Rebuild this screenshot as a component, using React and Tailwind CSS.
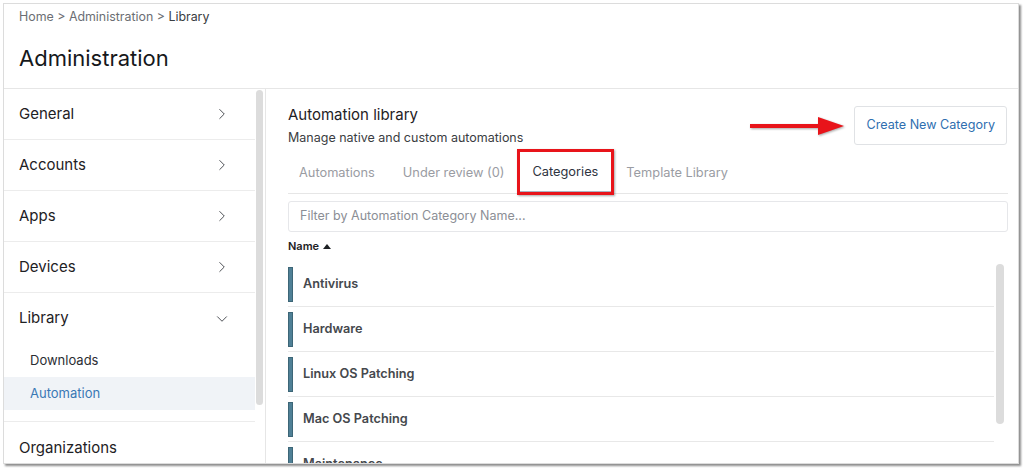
import React from "react";
import { ChevronRight, ChevronDown } from "lucide-react";

const navItems = ["General", "Accounts", "Apps", "Devices"];
const categories = ["Antivirus", "Hardware", "Linux OS Patching", "Mac OS Patching", "Maintenance"];
const tabs = ["Automations", "Under review (0)", "Categories", "Template Library"];

function NavRow({ label }) {
  return (
    <div className="flex h-[51px] items-center justify-between border-b border-[#ececec] pl-[15px] pr-[24px]">
      <span className="text-[15px] text-[#1e2124]">{label}</span>
      <ChevronRight size={18} strokeWidth={1.3} className="text-[#4a4d52]" />
    </div>
  );
}

function Arrow() {
  return (
    <svg width="96" height="22" viewBox="0 0 96 22" className="drop-shadow-[1px_1px_1px_rgba(0,0,0,0.35)]">
      <rect x="0" y="9" width="70" height="4" fill="#e8141a" />
      <polygon points="68,2 94,11 68,20" fill="#e8141a" />
    </svg>
  );
}

export default function App() {
  return (
    <div className="h-[468px] w-[1024px] overflow-hidden bg-white" style={{ fontFamily: "Inter, 'Noto Sans', sans-serif" }}>
      <div className="ml-[3px] mt-[3px] flex h-[461px] w-[1016px] flex-col overflow-hidden border border-[#dcdcdc] bg-white shadow-[2px_2px_2px_rgba(0,0,0,0.45)]">
        <div className="h-[85px] shrink-0 border-b border-[#e6e6e6] pl-[15px] pt-[5px]">
          <div className="text-[12.4px] leading-[16px] text-[#6b6e73]">
            Home &gt; Administration &gt; <span className="text-[#3a3d42]">Library</span>
          </div>
          <h1 className="mt-[19px] text-[22px] leading-[28px] text-[#16181b]">Administration</h1>
        </div>
        <div className="flex min-h-0 flex-1">
          <aside className="flex w-[262px] shrink-0 border-r border-[#e6e6e6]">
            <div className="w-[252px]">
              {navItems.map((n) => (
                <NavRow key={n} label={n} />
              ))}
              <div className="border-b border-[#ececec] pb-[11px]">
                <div className="flex h-[51px] items-center justify-between pl-[15px] pr-[24px]">
                  <span className="text-[15px] text-[#1e2124]">Library</span>
                  <ChevronDown size={18} strokeWidth={1.3} className="text-[#4a4d52]" />
                </div>
                <div className="flex h-[33px] items-center pl-[26px] text-[13px] text-[#2b2e33]">Downloads</div>
                <div className="flex h-[33px] items-center bg-[#f0f3f7] pl-[26px] text-[13px] text-[#3a78b5]">Automation</div>
              </div>
              <div className="flex h-[52px] items-center pl-[15px] text-[15px] text-[#1e2124]">Organizations</div>
            </div>
            <div className="w-[10px] pl-[1px] pt-[1px]">
              <div className="h-[315px] w-[7px] rounded-full bg-[#dcdcdc]" />
            </div>
          </aside>
          <main className="min-w-0 flex-1 pl-[22px] pr-[10px]">
            <div className="flex items-start justify-between pt-[16px]">
              <div>
                <div className="text-[15px] leading-[20px] text-[#1e2124]">Automation library</div>
                <div className="mt-[5px] text-[12.5px] leading-[16px] text-[#3a3d42]">Manage native and custom automations</div>
              </div>
              <div className="mt-[1px] flex items-center gap-[8px]">
                <Arrow />
                <button className="mr-[1px] h-[39px] rounded-[3px] border border-[#e0e2e5] bg-white px-[11px] text-[12.6px] text-[#2f6fb0]">
                  Create New Category
                </button>
              </div>
            </div>
            <div className="mt-[6px] flex h-[42px] border-b border-[#e6e6e6]">
              <div className="-ml-[3px] flex">
                {tabs.map((t) => (
                  <div
                    key={t}
                    className={
                      t === "Categories"
                        ? "relative flex items-center border-b-2 border-[#aab4c2] px-[14px] text-[12.8px] text-[#2e3440]"
                        : "flex items-center px-[14px] text-[12.8px] text-[#9a9ca3]"
                    }
                  >
                    {t}
                    {t === "Categories" ? (
                      <div className="absolute -bottom-[4px] -left-[1px] -right-[2px] -top-[3px] border-[3px] border-[#e8141a] shadow-[1px_1px_2px_rgba(0,0,0,0.35)]" />
                    ) : null}
                  </div>
                ))}
              </div>
            </div>
            <div className="mt-[7px] flex h-[31px] items-center rounded-[3px] border border-[#e6e7ea] pl-[11px] text-[12.5px] text-[#8b8e95]">
              Filter by Automation Category Name...
            </div>
            <div className="mt-[6px] flex items-center gap-[4px] text-[11px] font-semibold text-[#1e2124]">
              Name
              <svg width="8" height="5" viewBox="0 0 8 5">
                <polygon points="0,5 4,0 8,5" fill="#1e2124" />
              </svg>
            </div>
            <div className="mt-[7px] flex">
              <div className="w-[706px]">
                {categories.map((c) => (
                  <div key={c} className="flex h-[45px] items-stretch border-b border-[#e8e8e8] pb-[4px] pt-[5px]">
                    <div className="w-[5px] border border-[#3d6677] bg-[#4f8096]" />
                    <div className="flex items-center pl-[10px] text-[12.7px] font-semibold text-[#45484d]">{c}</div>
                  </div>
                ))}
              </div>
              <div className="ml-[2px] pt-[2px]">
                <div className="h-[160px] w-[8px] rounded-full bg-[#dcdcdc]" />
              </div>
            </div>
          </main>
        </div>
      </div>
    </div>
  );
}
